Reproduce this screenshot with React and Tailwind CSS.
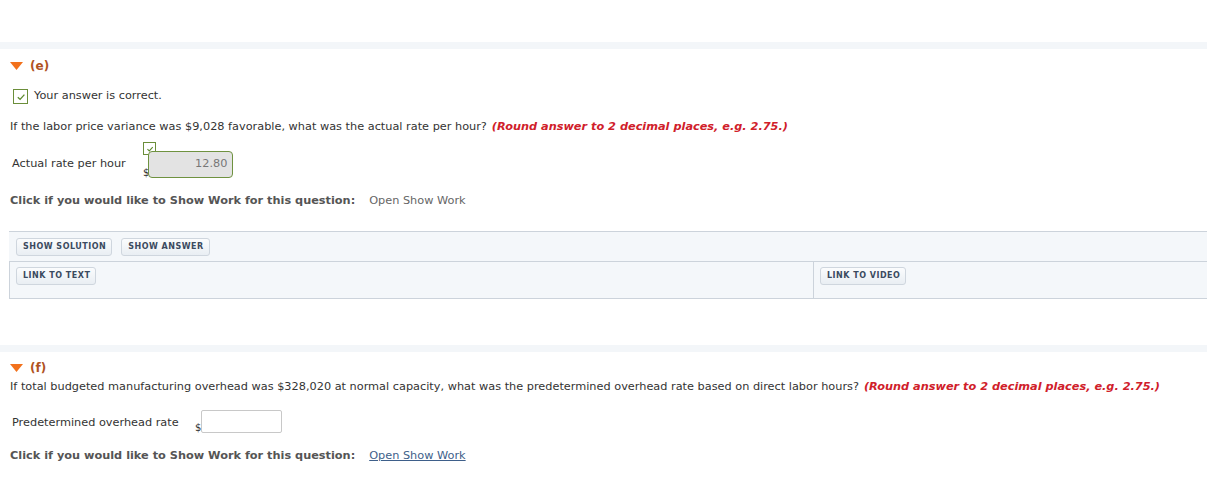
import React from 'react'

const font = { fontFamily: '"DejaVu Sans", Verdana, sans-serif' }

function Caret() {
  return (
    <svg width="13" height="8" viewBox="0 0 13 8" className="shrink-0">
      <path d="M0 0 H13 L6.5 8 Z" fill="#f2711c" />
    </svg>
  )
}

function Check({ size = 15 }) {
  return (
    <span
      className="inline-flex items-center justify-center border border-[#6b8e3a] bg-white shrink-0"
      style={{ width: size, height: size }}
    >
      <svg width={size - 5} height={size - 5} viewBox="0 0 10 10">
        <path d="M1.8 5.2 L4.1 7.4 L8.4 2.6" fill="none" stroke="#5d8a2e" strokeWidth="1.3" />
      </svg>
    </span>
  )
}

function Btn({ children }) {
  return (
    <button className="h-[18px] pl-[6px] pr-[5px] rounded-[3px] border border-[#cfd6de] bg-gradient-to-b from-[#fbfcfd] to-[#e9eef3] text-[8px] font-bold tracking-[0.5px] text-[#3b4a5f] leading-none">
      {children}
    </button>
  )
}

function Part({ letter }) {
  return (
    <div className="flex items-center gap-[7px] pl-[10px] h-[14px]">
      <Caret />
      <span className="text-[12px] font-bold text-[#b0521f]">({letter})</span>
    </div>
  )
}

function ShowWork({ link }) {
  return (
    <div className="flex items-center h-[14px] pl-[10px] text-[11.3px]">
      <span className="font-bold text-[#555]">Click if you would like to Show Work for this question:</span>
      <span className={link ? 'ml-[14px] text-[#3e5f8a] underline' : 'ml-[14px] text-[#666]'}>Open Show Work</span>
    </div>
  )
}

export default function App() {
  return (
    <div className="w-[1207px] h-[480px] bg-white overflow-hidden text-[#333]" style={font}>
      <div className="h-[42px]" />
      <div className="h-[7px] bg-[#f3f6f9]" />

      <div className="pt-[10px]">
        <Part letter="e" />
      </div>

      <div className="flex items-center gap-[6px] pl-[13px] mt-[16px] h-[15px] text-[11.3px]">
        <Check />
        <span>Your answer is correct.</span>
      </div>

      <div className="pl-[10px] mt-[16px] text-[11.3px] h-[14px] flex items-center">
        <span>If the labor price variance was $9,028 favorable, what was the actual rate per hour?</span>
        <span className="ml-[5px] italic font-bold text-[#d0202a]">(Round answer to 2 decimal places, e.g. 2.75.)</span>
      </div>

      <div className="flex pl-[12px] mt-[8px] text-[11.3px]">
        <span className="w-[131px] mt-[15px] h-[14px] leading-[14px]">Actual rate per hour</span>
        <div className="flex flex-col">
          <Check size={13} />
          <div className="flex items-end -mt-[4px]">
            <span className="text-[10px] leading-none -mr-[1px]">$</span>
            <div className="w-[85px] h-[27px] rounded-[4px] border border-[#6f9240] bg-[#e3e3e3] flex items-center justify-end pr-[5px] text-[#777]">
              12.80
            </div>
          </div>
        </div>
      </div>

      <div className="mt-[16px]">
        <ShowWork />
      </div>

      <div className="ml-[9px] mt-[23px] border-y border-[#ccd3db] bg-[#f4f7fa]">
        <div className="flex items-center gap-[9px] h-[30px] pl-[7px] border-b border-[#ccd3db]">
          <Btn>SHOW SOLUTION</Btn>
          <Btn>SHOW ANSWER</Btn>
        </div>
        <div className="flex h-[36px] border-l border-[#ccd3db]">
          <div className="w-[804px] border-r border-[#ccd3db] pl-[6px] pt-[5px] flex items-start">
            <Btn>LINK TO TEXT</Btn>
          </div>
          <div className="pl-[6px] pt-[5px] flex items-start">
            <Btn>LINK TO VIDEO</Btn>
          </div>
        </div>
      </div>

      <div className="h-[46px]" />
      <div className="h-[7px] bg-[#f3f6f9]" />

      <div className="pt-[9px]">
        <Part letter="f" />
      </div>

      <div className="pl-[10px] mt-[5px] text-[11.3px] h-[14px] flex items-center">
        <span>If total budgeted manufacturing overhead was $328,020 at normal capacity, what was the predetermined overhead rate based on direct labor hours?</span>
        <span className="ml-[5px] italic font-bold text-[#d0202a]">(Round answer to 2 decimal places, e.g. 2.75.)</span>
      </div>

      <div className="flex pl-[12px] mt-[16px] text-[11.3px]">
        <span className="w-[183px] mt-[6px] h-[14px] leading-[14px]">Predetermined overhead rate</span>
        <div className="flex items-end">
          <span className="text-[10px] leading-none">$</span>
          <div className="w-[81px] h-[23px] rounded-[2px] border border-[#c8c8c8] bg-white" />
        </div>
      </div>

      <div className="mt-[16px]">
        <ShowWork link />
      </div>
    </div>
  )
}
